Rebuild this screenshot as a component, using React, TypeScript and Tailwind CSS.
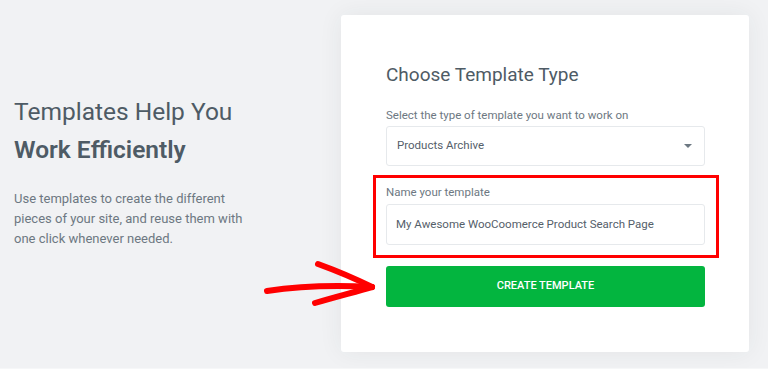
import React from "react";

export default function App() {
  return (
    <div
      className="relative w-[768px] h-[369px] overflow-hidden bg-[#f1f2f4] flex border-b border-[#f6f7f8]"
      style={{ fontFamily: "Roboto, 'Noto Sans', Arial, sans-serif" }}
    >
      <div className="w-[341px] shrink-0 pl-[14px] pt-[93px]">
        <h1 className="text-[24.5px] leading-[38px] text-[#4e5b65]">
          <span className="font-normal">Templates Help You</span>
          <br />
          <span className="font-semibold">Work Efficiently</span>
        </h1>
        <p className="mt-[20px] text-[13px] leading-[20px] text-[#6d7882] w-[240px]">
          Use templates to create the different pieces of your site, and reuse them with one click whenever needed.
        </p>
      </div>

      <div className="mt-[15px] w-[408px] h-[337px] bg-white rounded-[3px] shadow-[0_0_24px_rgba(40,50,60,0.07)] pl-[45px] pr-[44px] pt-[46px]">
        <h2 className="text-[19px] leading-[28px] text-[#4e5b65]">Choose Template Type</h2>
        <div className="mt-[18px] text-[11.5px] leading-[16px] text-[#6d7882]">
          Select the type of template you want to work on
        </div>
        <div className="mt-[3px] h-[40px] border border-[#e6e9ec] rounded-[3px] flex items-center justify-between pl-[10px] pr-[12px] text-[11.5px] text-[#55606a]">
          <span>Products Archive</span>
          <span className="w-0 h-0 border-l-[4px] border-r-[4px] border-t-[4px] border-l-transparent border-r-transparent border-t-[#6d7882]" />
        </div>

        <div className="mt-[9px] -ml-[13px] -mr-[14px] border-[3px] border-[#ff0000] pl-[10px] pr-[11px] pt-[6px] pb-[10px]">
          <div className="text-[11.5px] leading-[16px] text-[#6d7882]">Name your template</div>
          <div className="mt-[4px] h-[41px] border border-[#e6e9ec] rounded-[3px] flex items-center pl-[9px] text-[11.5px] text-[#55606a]">
            My Awesome WooCoomerce Product Search Page
          </div>
        </div>

        <button className="mt-[8px] w-full h-[41px] bg-[#03b53f] rounded-[3px] text-white text-[11px] font-medium uppercase flex items-center justify-center">
          Create Template
        </button>
      </div>

      <svg
        className="absolute left-0 top-0 pointer-events-none"
        width="768"
        height="369"
        viewBox="0 0 768 369"
      >
        <g fill="none" stroke="#ff0000" strokeWidth="6" strokeLinecap="round" strokeLinejoin="round">
          <path d="M267 291 C300 286 335 285 372 287" />
          <path d="M318 264 C340 272 356 279 372 287" />
          <path d="M315 303 C335 297 355 292 372 287" />
        </g>
      </svg>
    </div>
  );
}
